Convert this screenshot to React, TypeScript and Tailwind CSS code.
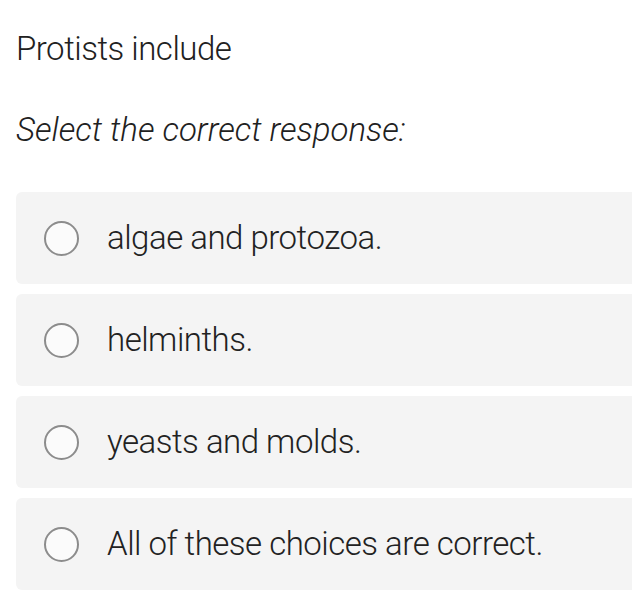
import React from 'react';

const choices = [
  'algae and protozoa.',
  'helminths.',
  'yeasts and molds.',
  'All of these choices are correct.',
];

export default function App() {
  return (
    <div className="w-[632px] h-[608px] overflow-hidden bg-white pl-4 pt-[29px] text-[#212121] font-['Roboto',sans-serif]">
      <h1 className="text-[33px] leading-[40px] font-light tracking-[-0.015em]">Protists include</h1>
      <p className="mt-[41px] text-[33px] leading-[40px] font-light italic">
        Select the correct response:
      </p>

      <div className="mt-[42px] w-[640px] flex flex-col gap-[10px]">
        {choices.map((c) => (
          <label
            key={c}
            className="h-[92px] flex items-center rounded-md bg-[#f4f4f4] pl-7 cursor-pointer"
          >
            <span className="w-[35px] h-[35px] shrink-0 rounded-full border-2 border-[#8c8c8c] bg-[#fbfbfb]" />
            <span className="ml-[28px] text-[33px] leading-[40px] font-light tracking-[-0.015em] text-[#222]">{c}</span>
          </label>
        ))}
      </div>
    </div>
  );
}
